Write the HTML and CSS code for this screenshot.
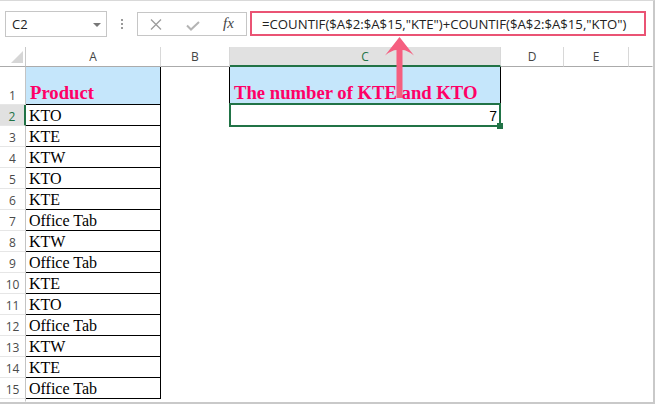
FILE: index.html
```html
<!DOCTYPE html>
<html>
<head>
<meta charset="utf-8">
<link rel="stylesheet" href="styles.css">
</head>
<body>
<div class="window">
  <div class="toolbar">
    <div class="namebox"><span>C2</span><span class="caret"></span></div>
    <div class="grip"><i></i><i></i><i></i></div>
    <div class="fbuttons">
      <svg class="ico-x" width="12" height="11" viewBox="0 0 12 11"><path d="M1 0.5 L11 10.5 M11 0.5 L1 10.5" stroke="#9c9c9c" stroke-width="1.3" fill="none"/></svg>
      <svg class="ico-ok" width="14" height="10" viewBox="0 0 14 10"><path d="M1 4.5 L5 8.5 L13 1" stroke="#b4b4b4" stroke-width="2" fill="none"/></svg>
      <span class="fx">fx</span>
    </div>
    <div class="formula">=COUNTIF($A$2:$A$15,"KTE")+COUNTIF($A$2:$A$15,"KTO")</div>
  </div>
  <div class="sheet">
    <div class="c h corner"><svg width="12" height="12" viewBox="0 0 12 12"><path d="M12 0 L12 12 L0 12 Z" fill="#d6d6d6"/></svg></div>
    <div class="c h">A</div>
    <div class="c h">B</div>
    <div class="c h sel">C</div>
    <div class="c h">D</div>
    <div class="c h">E</div>
    <div class="c h rest"></div>

    <div class="c rh">1</div>
    <div class="c a title">Product</div>
    <div class="c b1"></div>
    <div class="c ctitle title">The number of KTE and KTO</div>
    <div class="c"></div><div class="c"></div><div class="c"></div>

    <div class="c rh sel">2</div>
    <div class="c a">KTO</div>
    <div class="c"></div>
    <div class="c result">7<div class="selbox"><span class="handle"></span></div></div>
    <div class="c"></div><div class="c"></div><div class="c"></div>

    <div class="c rh">3</div><div class="c a">KTE</div><div class="c"></div><div class="c"></div><div class="c"></div><div class="c"></div><div class="c"></div>
    <div class="c rh">4</div><div class="c a">KTW</div><div class="c"></div><div class="c"></div><div class="c"></div><div class="c"></div><div class="c"></div>
    <div class="c rh">5</div><div class="c a">KTO</div><div class="c"></div><div class="c"></div><div class="c"></div><div class="c"></div><div class="c"></div>
    <div class="c rh">6</div><div class="c a">KTE</div><div class="c"></div><div class="c"></div><div class="c"></div><div class="c"></div><div class="c"></div>
    <div class="c rh">7</div><div class="c a">Office Tab</div><div class="c"></div><div class="c"></div><div class="c"></div><div class="c"></div><div class="c"></div>
    <div class="c rh">8</div><div class="c a">KTW</div><div class="c"></div><div class="c"></div><div class="c"></div><div class="c"></div><div class="c"></div>
    <div class="c rh">9</div><div class="c a">Office Tab</div><div class="c"></div><div class="c"></div><div class="c"></div><div class="c"></div><div class="c"></div>
    <div class="c rh">10</div><div class="c a">KTE</div><div class="c"></div><div class="c"></div><div class="c"></div><div class="c"></div><div class="c"></div>
    <div class="c rh">11</div><div class="c a">KTO</div><div class="c"></div><div class="c"></div><div class="c"></div><div class="c"></div><div class="c"></div>
    <div class="c rh">12</div><div class="c a">Office Tab</div><div class="c"></div><div class="c"></div><div class="c"></div><div class="c"></div><div class="c"></div>
    <div class="c rh">13</div><div class="c a">KTW</div><div class="c"></div><div class="c"></div><div class="c"></div><div class="c"></div><div class="c"></div>
    <div class="c rh">14</div><div class="c a">KTE</div><div class="c"></div><div class="c"></div><div class="c"></div><div class="c"></div><div class="c"></div>
    <div class="c rh">15</div><div class="c a">Office Tab</div><div class="c"></div><div class="c"></div><div class="c"></div><div class="c"></div><div class="c"></div>
    <div class="c rh last"></div><div class="c"></div><div class="c"></div><div class="c"></div><div class="c"></div><div class="c"></div><div class="c"></div>
  </div>
  <svg class="arrow" width="34" height="65" viewBox="0 0 34 65"><path d="M16.5 2 L31 20.5 Q24 15 19.5 15 L19.5 63 L13.5 63 L13.5 15 Q9 15 2 20.5 Z" fill="#f55f80"/></svg>
</div>
</body>
</html>
```

FILE: styles.css
```css
html, body {
  margin: 0;
  padding: 0;
  background: #ffffff;
}

.window {
  position: relative;
  width: 653px;
  height: 401px;
  border-top: 1px solid #d9d9d9;
  border-right: 2px solid #c9c9c9;
  border-bottom: 2px solid #c9c9c9;
  overflow: hidden;
  background: #ffffff;
  font-family: "Open Sans", "Noto Sans", sans-serif;
}

/* ---------- formula bar ---------- */
.toolbar {
  height: 46px;
  box-sizing: border-box;
  padding: 10px 0 0 5px;
  display: flex;
  align-items: flex-start;
}

.namebox {
  width: 102px;
  height: 26px;
  box-sizing: border-box;
  border: 1px solid #c6c6c6;
  display: flex;
  align-items: center;
  justify-content: space-between;
  padding: 0 5px 0 6px;
  font-size: 13px;
  color: #222;
}

.caret {
  width: 0;
  height: 0;
  border-left: 4px solid transparent;
  border-right: 4px solid transparent;
  border-top: 4px solid #777;
  margin-top: 1px;
}

.grip {
  margin: 8px 14px 0 14px;
  display: flex;
  flex-direction: column;
  gap: 2px;
}

.grip i {
  display: block;
  width: 2px;
  height: 2px;
  background: #9a9a9a;
}

.fbuttons {
  width: 110px;
  height: 24px;
  margin-top: 1px;
  box-sizing: border-box;
  border: 1px solid #c6c6c6;
  display: flex;
  align-items: center;
  padding-left: 12px;
}

.ico-x {
  margin-top: 1px;
}

.ico-ok {
  margin-left: 24px;
  margin-top: 3px;
}

.fx {
  margin-left: 23px;
  font-family: "Liberation Serif", serif;
  font-style: italic;
  font-size: 15px;
  color: #444;
  margin-top: -1px;
}

.formula {
  margin-left: 3px;
  width: 396px;
  height: 25px;
  box-sizing: border-box;
  border: 2px solid #ea5374;
  display: flex;
  align-items: center;
  padding-left: 10px;
  font-size: 13.2px;
  color: #222;
  white-space: nowrap;
}

/* ---------- sheet ---------- */
.sheet {
  display: grid;
  grid-template-columns: 26px 135px 69px 271px 63px 65px 1fr;
  grid-template-rows: 20px 38px repeat(14, 21px) 1fr;
}

.c {
  box-sizing: border-box;
  border-right: 1px solid transparent;
  border-bottom: 1px solid transparent;
  display: flex;
  align-items: flex-end;
  min-width: 0;
}

.h {
  border-right-color: #d8d8d8;
  border-bottom-color: #ababab;
  align-items: center;
  justify-content: center;
  font-size: 12px;
  color: #444;
  line-height: 1;
  padding-top: 1px;
}

.h.rest {
  border-right-color: transparent;
}

.h.corner {
  justify-content: flex-end;
  align-items: flex-end;
  padding: 0 2px 3px 0;
  border-right-color: #c8c8c8;
}

.h.sel {
  background: #e1e1e1;
  border-bottom: 2px solid #217346;
  color: #217346;
}

.rh {
  border-right-color: #c4c4c4;
  border-bottom-color: #e6e6e6;
  justify-content: center;
  font-size: 12px;
  line-height: 1;
  color: #4a4a4a;
  padding-bottom: 2px;
}

.rh.sel {
  background: #e1e1e1;
  border-right: 2px solid #217346;
  color: #217346;
}

.rh.last {
  border-bottom-color: transparent;
}

.a {
  border-right-color: #000;
  border-bottom-color: #000;
  font-family: "Liberation Serif", serif;
  font-size: 16px;
  line-height: 1;
  color: #000;
  padding: 0 0 1px 3px;
  white-space: nowrap;
}

.title {
  background: #c5e6fb;
  font-family: "Liberation Serif", serif;
  font-weight: bold;
  font-size: 18.67px;
  line-height: 1;
  color: #ff0066;
  padding: 0 0 1px 4px;
  white-space: nowrap;
}

.a.title {
  border-bottom-color: #000;
}

.b1 {
  border-right-color: #000;
}

.ctitle {
  border-right-color: #000;
  padding-left: 4px;
}

.result {
  position: relative;
  justify-content: flex-end;
  font-family: "Liberation Sans", sans-serif;
  font-size: 14px;
  line-height: 1;
  color: #000;
  padding: 0 3px 2px 0;
}

.selbox {
  position: absolute;
  left: -1px;
  top: -2px;
  width: 272px;
  height: 24px;
  box-sizing: border-box;
  border: 2px solid #217346;
}

.handle {
  position: absolute;
  right: -4px;
  bottom: -4px;
  width: 6px;
  height: 6px;
  background: #217346;
}

.arrow {
  position: absolute;
  left: 383px;
  top: 34px;
}
```
